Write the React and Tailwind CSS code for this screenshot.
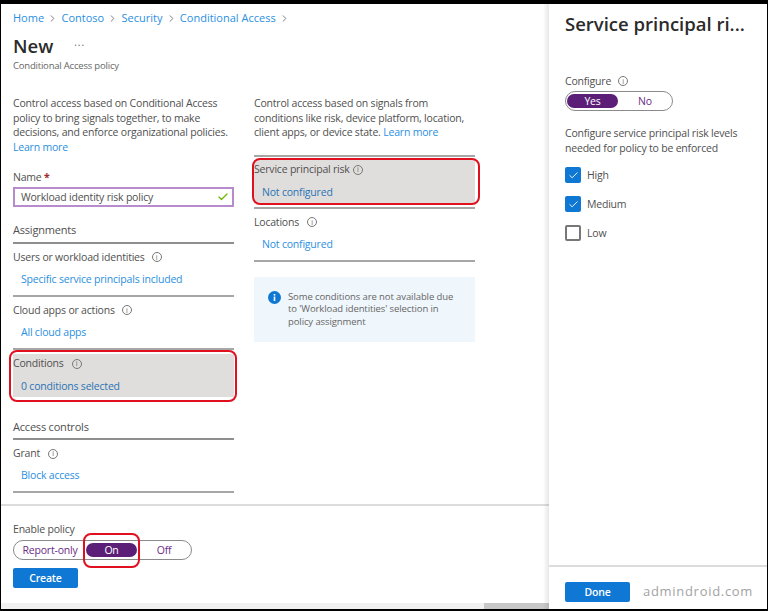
import React from 'react';
import { Check, ChevronRight } from 'lucide-react';

const font = { fontFamily: '"Open Sans", "Noto Sans", sans-serif' };

const InfoDot = ({ className = '' }) => (
    <span className={`inline-flex items-center justify-center w-[10px] h-[10px] rounded-full border border-[#777] text-[7px] leading-none text-[#666] ${className}`}>i</span>
);

const Crumb = ({ label }) => (
    <>
        <span>{label}</span>
        <ChevronRight size={11} className="text-[#777] mx-[3.2px]" />
    </>
);

const RedBox = ({ className = '' }) => (
    <div className={`absolute border-2 border-[#e0101f] rounded-lg ${className}`} />
);

// label + blue link row, ends with a grey divider
const Section = ({ label, link, gap = 'ml-[7px]' }) => (
    <div className="border-b-2 border-[#a6a6a6]">
        <div className="h-[27px] flex items-center text-[#505050]">
            {label}
            <InfoDot className={gap} />
        </div>
        <div className="pl-2 pt-[1px] h-[24px] text-[#2b8fe0]">{link}</div>
    </div>
);

// grey selected row with the red callout round it
const Selected = ({ label, link, gap = 'ml-[7px]', ring }) => (
    <div className="relative bg-[#e0dedc] h-[43px]">
        <div className="h-[20px] flex items-center text-[#505050]">
            {label}
            <InfoDot className={gap} />
        </div>
        <div className="pl-2 pt-[5px] text-[#2a73b5]">{link}</div>
        <RedBox className={ring} />
    </div>
);

const Heading = ({ children, className = '' }) => (
    <div className={`text-[11px] text-[#505050] border-b-2 border-[#8f8f8f] pb-[4px] ${className}`}>{children}</div>
);

const Box = ({ label, checked }) => (
    <div className="flex items-center gap-[6px] h-[16px] text-[#505050]">
        <span className={`w-[16px] h-[16px] rounded-[2px] flex items-center justify-center ${checked ? 'bg-[#0f78d4]' : 'border-2 border-[#777]'}`}>
            {checked && <Check size={11} className="text-white" />}
        </span>
        {label}
    </div>
);

const App = () => (
    <div style={font} className="w-[768px] h-[611px] bg-black pt-[4px] pl-[1px] pr-[1px] pb-[2px] overflow-hidden text-[10.5px] leading-[14.5px] tracking-[-0.2px]">
        <div className="w-full h-full bg-white flex">
            <div className="flex-1 min-w-0 flex flex-col relative">
                <div className="pl-[12px] pt-[7px] h-[502px] border-b-2 border-[#dcdcdc]">
                    <div className="flex items-center text-[#2b8fe0] text-[11px] h-[14px] tracking-[0px]">
                        <Crumb label="Home" />
                        <Crumb label="Contoso" />
                        <Crumb label="Security" />
                        <Crumb label="Conditional Access" />
                    </div>
                    <div className="flex items-center mt-[8px] h-[26px] text-[18.5px] text-[#2b2b2b] font-semibold tracking-normal">
                        New
                        <span className="ml-[21px] text-[10px] text-[#666] tracking-[1px] font-normal -mt-2">...</span>
                    </div>
                    <div className="text-[9.5px] leading-[12px] text-[#666] mt-[1px]">Conditional Access policy</div>

                    <div className="flex gap-[20px] mt-[24px]">
                        <div className="w-[221px]">
                            <p className="text-[#505050]">
                                Control access based on Conditional Access policy to bring signals together, to make decisions, and enforce organizational policies.{' '}
                                <span className="text-[#2b8fe0]">Learn more</span>
                            </p>
                            <div className="mt-[16px] h-[14px] text-[#505050]">Name <span className="text-[#a4262c] font-bold">*</span></div>
                            <div className="mt-[3px] h-[20px] border-2 border-[#b88ccc] flex items-center justify-between pl-[6px] pr-[3px] text-[#505050]">
                                Workload identity risk policy
                                <Check size={12} strokeWidth={2.5} className="text-[#6bb700]" />
                            </div>
                            <Heading className="mt-[16px]">Assignments</Heading>
                            <Section label="Users or workload identities" link="Specific service principals included" />
                            <Section label="Cloud apps or actions" link="All cloud apps" />
                            <div className="mt-[4px]">
                                <Selected
                                    label="Conditions"
                                    link="0 conditions selected"
                                    gap="ml-[8px]"
                                    ring="-left-[4px] -right-[3px] -top-[4px] -bottom-[5px]"
                                />
                            </div>
                            <Heading className="mt-[23px]">Access controls</Heading>
                            <Section label="Grant" link="Block access" gap="ml-[8px]" />
                        </div>

                        <div className="w-[221px]">
                            <p className="text-[#505050]">
                                Control access based on signals from conditions like risk, device platform, location, client apps, or device state.{' '}
                                <span className="text-[#2b8fe0]">Learn more</span>
                            </p>
                            <div className="mt-[15px] border-t-2 border-[#a6a6a6] pt-[3px]">
                                <Selected
                                    label="Service principal risk"
                                    link="Not configured"
                                    gap="ml-[3px]"
                                    ring="-left-[2px] -right-[5px] -top-[2px] -bottom-[2px]"
                                />
                            </div>
                            <div className="mt-[4px] border-t-2 border-[#a6a6a6]">
                                <Section label="Locations" link="Not configured" gap="ml-[8px]" />
                            </div>
                            <div className="mt-[15px] h-[65px] bg-[#eff6fc] flex gap-[7px] pl-[14px] pr-[16px] pt-[14px] text-[9.5px] leading-[12.5px] text-[#666] tracking-[-0.1px]">
                                <svg width="13" height="13" viewBox="0 0 13 13" className="shrink-0">
                                    <circle cx="6.5" cy="6.5" r="6.5" fill="#0f78d4" />
                                    <rect x="5.7" y="5.5" width="1.6" height="4.5" fill="#fff" />
                                    <rect x="5.7" y="3" width="1.6" height="1.6" fill="#fff" />
                                </svg>
                                <p>Some conditions are not available due to 'Workload identities' selection in policy assignment</p>
                            </div>
                        </div>
                    </div>
                </div>

                <div className="pl-[12px] pt-[16px] flex-1">
                    <div className="text-[#505050] h-[14px]">Enable policy</div>
                    <div className="relative mt-[4px] w-[179px] h-[20px] rounded-full border border-[#8a8a8a] flex items-center text-[#6b2c86]">
                        <span className="w-[72px] text-center">Report-only</span>
                        <span className="w-[51px] h-[14px] rounded-full bg-[#5c1f78] text-white flex items-center justify-center">On</span>
                        <span className="flex-1 text-center">Off</span>
                        <RedBox className="left-[69px] -top-[8px] w-[57px] h-[35px]" />
                    </div>
                    <div className="mt-[8px] w-[65px] h-[20px] rounded-[2px] bg-[#0f78d4] text-white font-semibold flex items-center justify-center">Create</div>
                </div>
                {/* horizontal scrollbar */}
                <div className="h-[6px] bg-[#f1f1f1] flex justify-end">
                    <div className="w-[65px] bg-[#c8c8c8]" />
                </div>
                <div className="absolute top-0 bottom-0 right-0 w-[6px] bg-gradient-to-r from-transparent to-[#00000018]" />
            </div>

            <div className="w-[218px] flex flex-col">
                <div className="flex-1 pl-[16px] pr-[10px]">
                    <div className="text-[18.5px] leading-[26px] mt-[7px] text-[#2b2b2b] font-semibold tracking-normal whitespace-nowrap">Service principal ri...</div>
                    <div className="mt-[37px] h-[14px] flex items-center text-[#505050]">
                        Configure
                        <InfoDot className="ml-[7px]" />
                    </div>
                    <div className="mt-[3px] w-[108px] h-[20px] rounded-full border border-[#8a8a8a] flex items-center pl-[1px] text-[#6b2c86]">
                        <span className="w-[51px] h-[14px] rounded-full bg-[#5c1f78] text-white flex items-center justify-center">Yes</span>
                        <span className="flex-1 text-center">No</span>
                    </div>
                    <p className="mt-[15px] text-[#505050]">Configure service principal risk levels needed for policy to be enforced</p>
                    <div className="mt-[12px] flex flex-col gap-[13px]">
                        <Box label="High" checked />
                        <Box label="Medium" checked />
                        <Box label="Low" />
                    </div>
                </div>
                <div className="h-[44px] border-t-2 border-[#dcdcdc] pl-[16px] pt-[15px] flex items-start gap-[13px]">
                    <div className="w-[65px] h-[20px] rounded-[2px] bg-[#0f78d4] text-white font-semibold flex items-center justify-center">Done</div>
                    <span className="text-[13px] leading-[18px] text-[#a3a3a3] tracking-[0.7px]">admindroid.com</span>
                </div>
            </div>
        </div>
    </div>
);

export default App;
